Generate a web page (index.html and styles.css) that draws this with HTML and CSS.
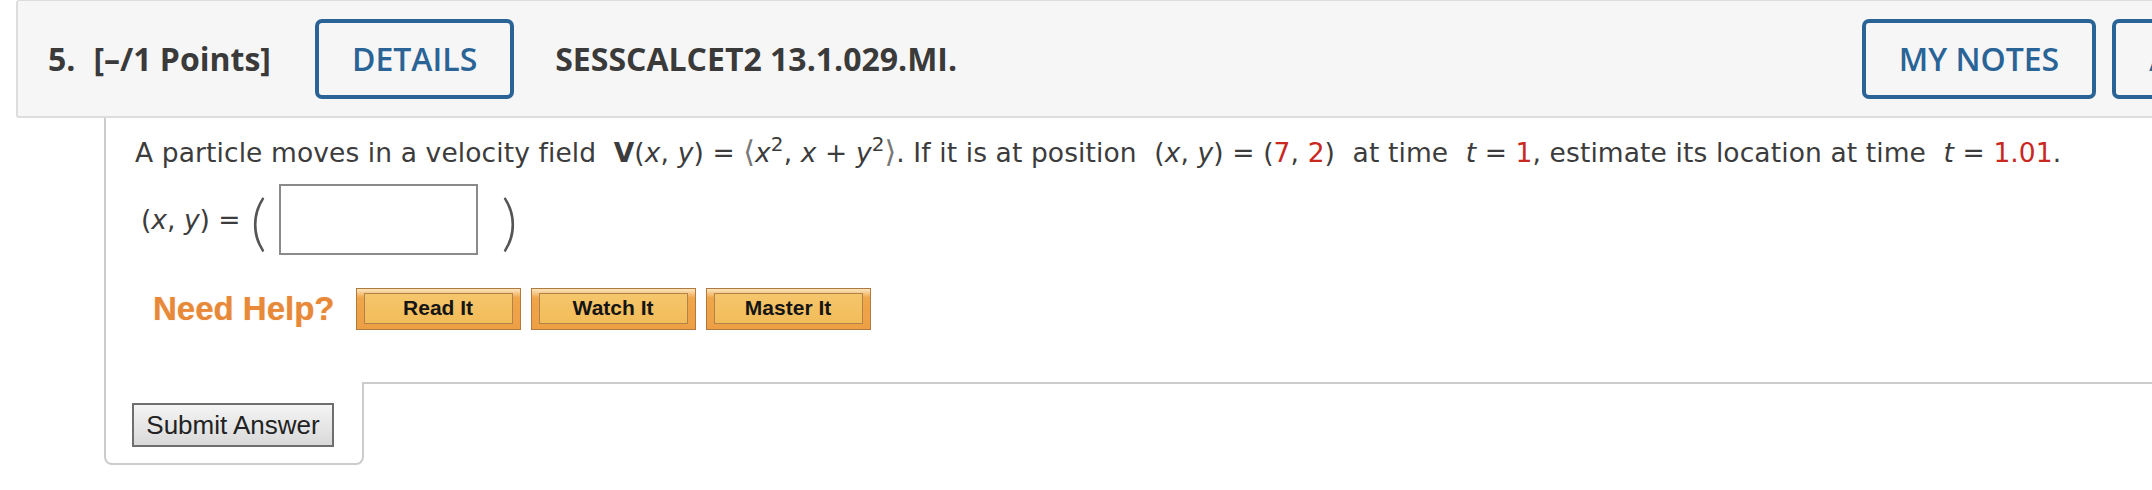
FILE: index.html
```html
<!DOCTYPE html>
<html lang="en">
<head>
    <meta charset="UTF-8">
    <meta name="viewport" content="width=device-width, initial-scale=1.0">
    <title>Question 5</title>
    <link rel="stylesheet" href="styles.css">
</head>
<body>

<div class="question">
    <div class="q-header">
        <span class="q-num">5.</span>
        <span class="q-points">[–/1 Points]</span>
        <button class="btn-outline">DETAILS</button>
        <span class="q-title">SESSCALCET2 13.1.029.MI.</span>
        <div class="q-tools">
            <button class="btn-outline">MY NOTES</button>
            <button class="btn-outline">ASK YOUR TEACHER</button>
        </div>
    </div>

    <div class="q-body">
        <p class="q-text">A particle moves in a velocity field <span class="math"><b>V</b>(<i>x</i>, <i>y</i>) = <span class="ang">⟨</span><i>x</i><sup>2</sup>, <i>x</i> + <i>y</i><sup>2</sup><span class="ang">⟩</span></span>. If it is at position <span class="math gap-after">(<i>x</i>, <i>y</i>) = (<span class="red">7</span>, <span class="red">2</span>)</span> at time <span class="math"><i>t</i> = <span class="red">1</span></span>, estimate its location at time <span class="math"><i>t</i> = <span class="red">1.01</span></span>.</p>

        <div class="answer-row">
            <span class="math">(<i>x</i>, <i>y</i>) =</span>
            <span class="paren">(</span>
            <input type="text" class="answer-input">
            <span class="paren">)</span>
        </div>

        <div class="help-row">
            <span class="need-help">Need Help?</span>
            <button class="help-btn"><span>Read It</span></button>
            <button class="help-btn"><span>Watch It</span></button>
            <button class="help-btn"><span>Master It</span></button>
        </div>
    </div>

    <div class="q-footer">
        <div class="submit-tab">
            <button class="btn-submit">Submit Answer</button>
        </div>
        <div class="footer-rest"></div>
    </div>
</div>

</body>
</html>
```

FILE: styles.css
```css
body {
    margin: 0;
    font-family: "DejaVu Sans", Verdana, sans-serif;
    color: #333;
    overflow: hidden;
}
.q-header {
    display: flex;
    align-items: center;
    margin-left: 16px;
    margin-right: -600px;
    height: 115px;
    padding-left: 30px;
    background: #f6f6f6;
    border: 2px solid #ddd;
    border-top-width: 1px;
    border-radius: 3px;
    font-family: "Open Sans", sans-serif;
    font-size: 32px;
    font-weight: 700;
    color: #3a3a3a;
}
.q-num {
    margin-right: 18px;
}
.q-points {
    margin-right: 44px;
}
.q-title {
    margin-left: 41px;
}
.q-tools {
    display: flex;
    gap: 16px;
    margin-left: auto;
    padding-right: 260px;
}
.btn-outline {
    height: 80px;
    padding: 0 33px;
    background: transparent;
    border: 4px solid #2a6496;
    border-radius: 7px;
    font-family: "Open Sans", sans-serif;
    font-size: 32px;
    font-weight: 600;
    color: #2a6496;
    white-space: nowrap;
}
.q-body {
    margin-left: 104px;
    padding: 17px 0 52px 29px;
    border-left: 2px solid #ccc;
}
.q-text {
    margin: 0;
    font-size: 26.5px;
    letter-spacing: 0.1px;
    line-height: 36px;
    color: #3c3c3c;
    white-space: nowrap;
}
.math {
    margin-left: 9px;
}
.gap-after {
    margin-right: 9px;
}
.math i {
    font-style: italic;
}
.math sup {
    font-size: 20px;
    line-height: 0;
    vertical-align: 11px;
}
.ang {
    font-size: 30px;
    line-height: 0;
    color: #777;
}
.red {
    color: #c8281e;
}
.answer-row {
    display: flex;
    align-items: center;
    margin-top: 13px;
    padding-left: 6px;
    font-size: 26.5px;
    color: #3c3c3c;
}
.answer-row .math {
    margin-left: 0;
}
.paren {
    font-family: Lato, sans-serif;
    font-weight: 300;
    font-size: 62px;
    line-height: 1;
    color: #555;
    margin: 0 12px 0 10px;
}
.answer-input {
    width: 199px;
    height: 71px;
    box-sizing: border-box;
    border: 2px solid #8a8a8a;
    margin: 0 14px 0 0;
}
.help-row {
    display: flex;
    align-items: center;
    gap: 10px;
    margin-top: 33px;
    padding-left: 18px;
}
.need-help {
    margin-right: 11px;
    font-family: "Liberation Sans", Arial, sans-serif;
    font-size: 33px;
    font-weight: 700;
    color: #e8893a;
    text-shadow: 0 0 1px rgba(232, 137, 58, 0.6);
}
.help-btn {
    width: 165px;
    height: 42px;
    padding: 4px 7px 5px;
    border: 1px solid #b07a3e;
    background: linear-gradient(#fde6bf, #f0a64a 22%, #ee9f45);
    cursor: pointer;
}
.help-btn span {
    display: block;
    height: 100%;
    box-sizing: border-box;
    border: 1px solid #b08448;
    background: linear-gradient(#f5c66c, #f2bc59);
    font-family: "Liberation Sans", Arial, sans-serif;
    font-size: 21px;
    font-weight: 700;
    line-height: 28px;
    color: #151515;
}
.q-footer {
    display: flex;
    margin-left: 104px;
}
.submit-tab {
    width: 230px;
    padding: 21px 0 16px 26px;
    border: 2px solid #ccc;
    border-top: none;
    border-radius: 0 0 8px 8px;
}
.footer-rest {
    flex: 1;
    border-top: 2px solid #ccc;
}
.btn-submit {
    width: 202px;
    height: 44px;
    padding: 0;
    border: 2px solid #6e6e6e;
    background: linear-gradient(#f4f4f4, #d9d9d9);
    font-family: "Liberation Sans", Arial, sans-serif;
    font-size: 26px;
    color: #222;
}
```
